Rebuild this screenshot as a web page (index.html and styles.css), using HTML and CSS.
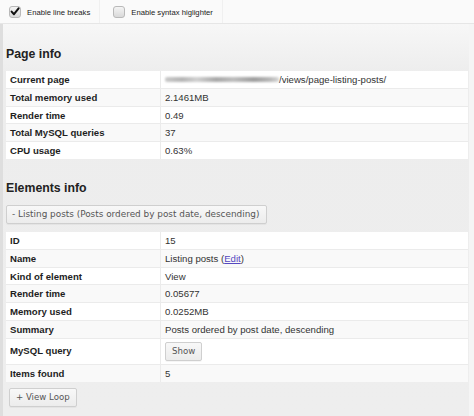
FILE: index.html
```html
<!DOCTYPE html>
<html>
<head>
<meta charset="utf-8">
<link rel="stylesheet" href="styles.css">
</head>
<body>
<div class="topbar">
  <label class="opt">
    <span class="cb checked"><svg width="12" height="12" viewBox="0 0 12 12"><path d="M2.6 5.6 L5 8.2 L9.6 2.4" fill="none" stroke="#111" stroke-width="2" stroke-linecap="round" stroke-linejoin="round"/></svg></span>
    <span class="opt-text">Enable line breaks</span>
  </label>
  <label class="opt">
    <span class="cb"></span>
    <span class="opt-text">Enable syntax higlighter</span>
  </label>
</div>
<div class="page">
  <h2 class="heading first">Page info</h2>
  <table class="info">
    <tr><td class="k">Current page</td><td class="v"><span class="blur"></span>/views/page-listing-posts/</td></tr>
    <tr class="alt"><td class="k">Total memory used</td><td class="v">2.1461MB</td></tr>
    <tr><td class="k">Render time</td><td class="v">0.49</td></tr>
    <tr class="alt"><td class="k">Total MySQL queries</td><td class="v">37</td></tr>
    <tr><td class="k">CPU usage</td><td class="v">0.63%</td></tr>
  </table>

  <h2 class="heading second">Elements info</h2>
  <button class="btn toggle">- Listing posts (Posts ordered by post date, descending)</button>
  <table class="info">
    <tr><td class="k">ID</td><td class="v">15</td></tr>
    <tr class="alt"><td class="k">Name</td><td class="v">Listing posts (<a class="link" href="#">Edit</a>)</td></tr>
    <tr><td class="k">Kind of element</td><td class="v">View</td></tr>
    <tr class="alt"><td class="k">Render time</td><td class="v">0.05677</td></tr>
    <tr><td class="k">Memory used</td><td class="v">0.0252MB</td></tr>
    <tr class="alt"><td class="k">Summary</td><td class="v">Posts ordered by post date, descending</td></tr>
    <tr class="tall"><td class="k">MySQL query</td><td class="v"><button class="btn small">Show</button></td></tr>
    <tr class="alt"><td class="k">Items found</td><td class="v">5</td></tr>
  </table>
  <button class="btn loop">+ View Loop</button>
</div>
</body>
</html>
```
FILE: styles.css
```css
html, body {
  margin: 0;
  padding: 0;
}
body {
  width: 474px;
  height: 416px;
  overflow: hidden;
  background: #eeeeee;
  font-family: "Liberation Sans", Arial, sans-serif;
  color: #222;
}
.topbar {
  height: 24px;
  box-sizing: border-box;
  background: #fafafa;
  border-bottom: 1px solid #e6e6e6;
  display: flex;
  align-items: flex-start;
  padding-left: 9px;
}
.opt {
  display: flex;
  align-items: flex-start;
  padding-top: 7px;
  height: 23px;
  box-sizing: border-box;
  padding-right: 9px;
  margin-right: 13px;
  border-right: 1px solid #f0f0f0;
}
.cb {
  width: 12px;
  height: 12px;
  box-sizing: border-box;
  border: 1px solid #b9b9b9;
  border-radius: 3px;
  background: linear-gradient(#f4f4f4, #d9d9d9);
  display: block;
  margin-top: -1px;
}
.cb svg {
  display: block;
  margin: -1px 0 0 -1px;
}
.opt-text {
  font-size: 7.7px;
  line-height: 12px;
  color: #222;
  margin-left: 6px;
}
.page {
  border-left: 3px solid #dedede;
  border-right: 5px solid #f5f5f5;
  padding: 0 1px 0 3px;
  height: 392px;
  background: linear-gradient(#f7f7f7 0px, #ededed 48px, #eeeeee 100%);
}
.heading {
  margin: 0;
  font-size: 12.3px;
  line-height: 15px;
  font-weight: bold;
  color: #222;
}
.heading.first {
  padding-top: 23px;
  margin-bottom: 9px;
}
.heading.second {
  margin-top: 22px;
  margin-bottom: 9px;
}
.info {
  width: 462px;
  border-collapse: collapse;
  background: #fff;
  font-size: 9.6px;
}
.info td {
  padding: 3px 4px 2px 4px;
  line-height: 11.8px;
  border-bottom: 1px solid #ebebeb;
  vertical-align: middle;
  white-space: nowrap;
}
.info tr:last-child td {
  border-bottom: none;
}
.info tr.alt td {
  background: #f9f9f9;
}
.info .k {
  width: 146px;
  font-weight: bold;
  color: #1e1e1e;
  border-right: 1px solid #ebebeb;
}
.info .v {
  color: #333;
}
.info tr.tall td {
  padding-top: 3px;
  padding-bottom: 3px;
}
.blur {
  display: inline-block;
  width: 114px;
  height: 5px;
  vertical-align: 1px;
  background: linear-gradient(90deg, #c8c8c8 0%, #b5b5b5 15%, #d0d0d0 28%, #a8a8a8 45%, #bdbdbd 60%, #9e9e9e 78%, #b8b8b8 92%, #d6d6d6 100%);
  filter: blur(1px);
  border-radius: 2px;
}
.link {
  color: #5548c0;
  text-decoration: underline;
}
.btn {
  display: block;
  font-family: "DejaVu Sans", Verdana, sans-serif;
  font-size: 8.9px;
  line-height: 11px;
  color: #555;
  background: linear-gradient(#f8f8f8, #ececec);
  border: 1px solid #cfcfcf;
  border-radius: 2px;
  padding: 3px 5px;
  margin: 0;
  box-shadow: 0 1px 0 rgba(0,0,0,0.04);
}
.toggle {
  width: 261px;
  text-align: left;
  margin-bottom: 8px;
}
.small {
  padding: 3px 6px;
  font-size: 8.6px;
}
.loop {
  margin: 6px 0 0 3px;
  padding: 3px 6px;
  font-size: 8.6px;
}
```
